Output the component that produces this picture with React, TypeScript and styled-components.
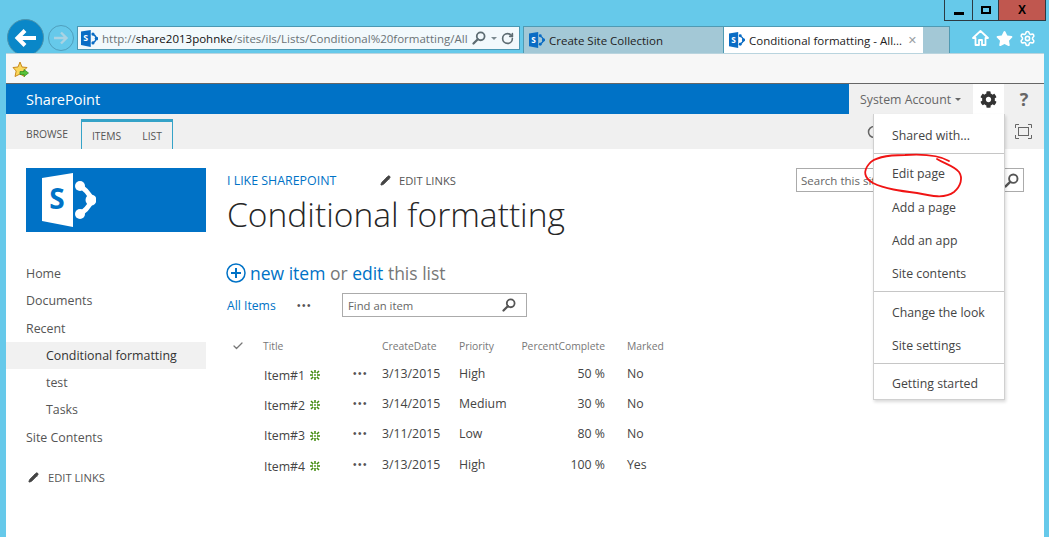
import React from 'react';
import styled, { createGlobalStyle } from 'styled-components';
import { FaCog, FaStar } from 'react-icons/fa';
import { Settings, RotateCw, Pencil, Check } from 'lucide-react';

const sans = `"Open Sans", "Liberation Sans", sans-serif`;

const GlobalStyle = createGlobalStyle`
  html, body { margin: 0; padding: 0; background: #66c9ea; }
  * { box-sizing: border-box; }
`;

const navLinks = [
  { label: 'Home' },
  { label: 'Documents' },
  { label: 'Recent' },
  { label: 'Conditional formatting', sub: true, active: true },
  { label: 'test', sub: true },
  { label: 'Tasks', sub: true },
  { label: 'Site Contents' },
];

const rows = [
  ['Item#1', '3/13/2015', 'High', '50 %', 'No'],
  ['Item#2', '3/14/2015', 'Medium', '30 %', 'No'],
  ['Item#3', '3/11/2015', 'Low', '80 %', 'No'],
  ['Item#4', '3/13/2015', 'High', '100 %', 'Yes'],
];

const menuSections = [
  ['Shared with...'],
  ['Edit page', 'Add a page', 'Add an app', 'Site contents'],
  ['Change the look', 'Site settings'],
  ['Getting started'],
];

function SpMark({ size, doc, node, letter }: { size: number; doc: string; node: string; letter: string }) {
  return (
    <svg width={size} height={size} viewBox="0 0 54 54">
      <polygon points="0,5 31,0 31,54 0,48" fill={doc} />
      <text x="15" y="36" textAnchor="middle" fontFamily={sans} fontWeight="700" fontSize="28" fill={letter}>
        S
      </text>
      <path d="M37 13 Q45 16 50 27 Q45 38 37 41" fill="none" stroke={node} strokeWidth="5" />
      <circle cx="38" cy="13" r="5" fill={node} />
      <circle cx="49" cy="27" r="5.500" fill={node} />
      <circle cx="38" cy="41" r="5" fill={node} />
    </svg>
  );
}

function Magnifier({ color = '#555', size = 15 }: { color?: string; size?: number }) {
  return (
    <svg width={size} height={size} viewBox="0 0 15 15">
      <circle cx="9.3" cy="5.7" r="4.2" fill="none" stroke={color} strokeWidth="1.9" />
      <path d="M6.2 8.8 L1.6 13.4" stroke={color} strokeWidth="2.4" strokeLinecap="round" />
    </svg>
  );
}

function NewBadge() {
  return (
    <svg width="10" height="10" viewBox="0 0 10 10">
      <g stroke="#3f8a0c" strokeWidth="1.5">
        <path d="M1 1 L9 9 M9 1 L1 9 M5 0 V10 M0 5 H10" />
      </g>
      <rect x="3" y="3" width="4" height="4" fill="#fff" />
      <rect x="4.2" y="4.2" width="1.6" height="1.6" fill="#3f8a0c" />
    </svg>
  );
}

export default function App() {
  return (
    <>
      <GlobalStyle />
      <Frame>
        <TitleRow>
          <WinButton $w={29}>
            <MinGlyph />
          </WinButton>
          <WinButton $w={27}>
            <MaxGlyph />
          </WinButton>
          <WinButton $w={48} $close>
            <CloseGlyph>X</CloseGlyph>
          </WinButton>
        </TitleRow>
        <NavRow>
          <BackButton>
            <svg width="24" height="20" viewBox="0 0 24 20">
              <path d="M22 10 H4 M11 2.5 L3.5 10 L11 17.5" fill="none" stroke="#fff" strokeWidth="4" />
            </svg>
          </BackButton>
          <ForwardButton>
            <svg width="16" height="14" viewBox="0 0 16 14">
              <path d="M1 7 H13 M8 1.5 L13.5 7 L8 12.5" fill="none" stroke="#a9d3e3" strokeWidth="2.4" />
            </svg>
          </ForwardButton>
          <AddressBar>
            <SpMark size={17} doc="#0a6cc4" node="#0a6cc4" letter="#fff" />
            <Url>
              http://<b>share2013pohnke</b>/sites/ils/Lists/Conditional%20formatting/All
            </Url>
            <AddressTools>
              <Magnifier color="#5d6c72" size={14} />
              <Caret $color="#7b8a90" />
              <RotateCw size={13} color="#5d6c72" strokeWidth={3} />
            </AddressTools>
          </AddressBar>
          <Tabs>
            <BrowserTab>
              <SpMark size={16} doc="#0a6cc4" node="#0a6cc4" letter="#fff" />
              <TabLabel>Create Site Collection</TabLabel>
            </BrowserTab>
            <BrowserTab $active>
              <SpMark size={16} doc="#0a6cc4" node="#0a6cc4" letter="#fff" />
              <TabLabel>Conditional formatting - All...</TabLabel>
              <TabClose>✕</TabClose>
            </BrowserTab>
          </Tabs>
          <ToolIcons>
            <svg width="17" height="16" viewBox="0 0 17 16">
              <path
                d="M8.5 1 L16 8 H13.5 V15 H10 V10 H7 V15 H3.5 V8 H1 Z"
                fill="none"
                stroke="#fff"
                strokeWidth="1.8"
                strokeLinejoin="round"
              />
            </svg>
            <FaStar size={17} color="#fff" />
            <Settings size={17} color="#fff" strokeWidth={2.2} />
          </ToolIcons>
        </NavRow>
        <Page>
          <FavBar>
            <svg width="17" height="17" viewBox="0 0 17 17">
              <polygon
                points="8,1 10,6 15,6.500 11.500,10 12.500,15.500 8,13 3,15.500 4.200,10 1,6.500 6,6"
                fill="#fbd75b"
                stroke="#c98a1c"
                strokeWidth="1"
              />
              <path d="M8 10.500 H12 V8.500 L16.500 12 L12 15.500 V13.500 H8 Z" fill="#57c23a" stroke="#2f8a1f" strokeWidth=".7" />
            </svg>
          </FavBar>
          <SuiteBar>
            <Brand>SharePoint</Brand>
            <Account>
              System Account
              <Caret $color="#666" />
            </Account>
            <GearCell>
              <FaCog size={17} color="#333" />
            </GearCell>
            <HelpCell>?</HelpCell>
          </SuiteBar>
          <Ribbon>
            <RibbonTab>BROWSE</RibbonTab>
            <ContextGroup>
              <RibbonTab>ITEMS</RibbonTab>
              <RibbonTab>LIST</RibbonTab>
            </ContextGroup>
            <RibbonTools>
              <svg width="9" height="14" viewBox="0 0 9 14">
                <path d="M8 1.500 A5.500 5.500 0 0 0 8 12.500" fill="none" stroke="#666" strokeWidth="1.500" />
              </svg>
              <svg width="17" height="15" viewBox="0 0 17 15">
                <path
                  d="M0.500 4 V0.500 H4 M13 0.500 H16.500 V4 M16.500 11 V14.500 H13 M4 14.500 H0.500 V11"
                  fill="none"
                  stroke="#666"
                />
                <rect x="3.500" y="3.500" width="10" height="8" fill="none" stroke="#666" />
              </svg>
            </RibbonTools>
          </Ribbon>
          <Body>
            <LeftColumn>
              <Logo>
                <SpMark size={54} doc="#fff" node="#fff" letter="#0072c6" />
              </Logo>
              <SideNav>
                {navLinks.map((link) => (
                  <SideLink key={link.label} $sub={link.sub} $active={link.active}>
                    {link.label}
                  </SideLink>
                ))}
              </SideNav>
              <SideEdit>
                <Pencil size={11} color="#444" fill="#444" />
                EDIT LINKS
              </SideEdit>
            </LeftColumn>
            <Main>
              <Crumbs>
                <CrumbLink>I LIKE SHAREPOINT</CrumbLink>
                <CrumbEdit>
                  <Pencil size={11} color="#444" fill="#444" />
                  EDIT LINKS
                </CrumbEdit>
              </Crumbs>
              <Title>Conditional formatting</Title>
              <Actions>
                <svg width="20" height="20" viewBox="0 0 20 20">
                  <circle cx="10" cy="10" r="9" fill="none" stroke="#0072c6" strokeWidth="1.500" />
                  <path d="M10 5 V15 M5 10 H15" stroke="#0072c6" strokeWidth="2" />
                </svg>
                <ActionText>
                  <Accent>new item</Accent> or <Accent>edit</Accent> this list
                </ActionText>
              </Actions>
              <ViewRow>
                <ViewLink>All Items</ViewLink>
                <Dots $view>•••</Dots>
                <FindBox>
                  Find an item
                  <Magnifier size={14} />
                </FindBox>
              </ViewRow>
              <HeaderRow>
                <Check size={12} color="#777" strokeWidth={2.5} />
                <span>Title</span>
                <span />
                <span>CreateDate</span>
                <span>Priority</span>
                <RightCell>PercentComplete</RightCell>
                <span>Marked</span>
              </HeaderRow>
              {rows.map(([title, date, priority, percent, marked]) => (
                <ItemRow key={title}>
                  <span />
                  <ItemTitle>
                    {title}
                    <NewBadge />
                  </ItemTitle>
                  <Dots>•••</Dots>
                  <span>{date}</span>
                  <span>{priority}</span>
                  <RightCell>{percent}</RightCell>
                  <span>{marked}</span>
                </ItemRow>
              ))}
            </Main>
            <SiteSearch>
              Search this site
              <Magnifier size={15} />
            </SiteSearch>
          </Body>
          <Menu>
            {menuSections.map((section) => (
              <MenuSection key={section[0]}>
                {section.map((label) => (
                  <MenuItem key={label}>{label}</MenuItem>
                ))}
              </MenuSection>
            ))}
          </Menu>
          <Scribble width="110" height="60" viewBox="0 0 110 60">
            <path
              d="M88 9 C78 3 60 2 44 3 C30 3 14 4 8 12 C2 19 3 26 12 31 C24 37 40 39 56 41 C70 44 84 47 93 40 C100 34 102 26 98 20 C93 14 84 12 76 7"
              fill="none"
              stroke="#f01414"
              strokeWidth="1.800"
              strokeLinecap="round"
            />
          </Scribble>
        </Page>
      </Frame>
    </>
  );
}

const Frame = styled.div`
  width: 1049px;
  height: 537px;
  overflow: hidden;
  display: flex;
  flex-direction: column;
  background: #66c9ea;
  font-family: ${sans};
`;

const TitleRow = styled.div`
  height: 20px;
  display: flex;
  justify-content: flex-end;
  padding-right: 3px;
`;

const WinButton = styled.div<{ $w: number; $close?: boolean }>`
  width: ${(p) => p.$w}px;
  height: 21px;
  display: flex;
  align-items: center;
  justify-content: center;
  border: 1px solid #2c3a42;
  border-top: 0;
  margin-left: -1px;
  background: ${(p) => (p.$close ? '#c0574f' : 'transparent')};
`;

const MinGlyph = styled.div`
  width: 10px;
  height: 3px;
  margin-top: 7px;
  background: #000;
`;

const MaxGlyph = styled.div`
  width: 10px;
  height: 8px;
  border: 2px solid #000;
`;

const CloseGlyph = styled.span`
  font: 700 12px "Liberation Sans", sans-serif;
  color: #000;
`;

const NavRow = styled.div`
  height: 33px;
  display: flex;
  align-items: flex-start;
  padding-top: 6px;
`;

const BackButton = styled.div`
  width: 37px;
  height: 37px;
  margin: -7px 0 0 7px;
  flex: none;
  display: flex;
  align-items: center;
  justify-content: center;
  border-radius: 50%;
  background: #0a87c8;
  border: 1px solid #4b93ad;
`;

const ForwardButton = styled.div`
  width: 26px;
  height: 26px;
  margin: -1px 0 0 4px;
  flex: none;
  display: flex;
  align-items: center;
  justify-content: center;
  border-radius: 50%;
  border: 1px solid #4f9fbd;
`;

const AddressBar = styled.div`
  width: 443px;
  height: 24px;
  margin-left: 3px;
  padding: 0 5px 0 3px;
  flex: none;
  display: flex;
  align-items: center;
  gap: 4px;
  background: #f2f9fc;
  border: 1px solid #4a98b3;
`;

const Url = styled.div`
  flex: 1;
  white-space: nowrap;
  font-size: 11.500px;
  color: #6a7276;

  b {
    font-weight: 400;
    color: #111;
  }
`;

const AddressTools = styled.div`
  display: flex;
  align-items: center;
  gap: 4px;
`;

const Caret = styled.span<{ $color: string }>`
  display: inline-block;
  width: 0;
  height: 0;
  margin-left: 1px;
  border-left: 3.500px solid transparent;
  border-right: 3.500px solid transparent;
  border-top: 3.500px solid ${(p) => p.$color};
`;

const Tabs = styled.div`
  width: 427px;
  height: 27px;
  margin-left: 3px;
  flex: none;
  display: flex;
  background: #a3c8d6;
  border: 1px solid #4f9ab3;
  border-bottom: 0;
`;

const BrowserTab = styled.div<{ $active?: boolean }>`
  width: ${(p) => (p.$active ? 200 : 199)}px;
  display: flex;
  align-items: center;
  gap: 4px;
  padding: 0 6px 0 5px;
  background: ${(p) => (p.$active ? '#fff' : 'transparent')};
  ${(p) => p.$active && 'border-left: 1px solid #4f9ab3;'}
`;

const TabLabel = styled.span`
  flex: 1;
  white-space: nowrap;
  font-size: 11.500px;
  color: #222;
`;

const TabClose = styled.span`
  font: 700 11px "DejaVu Sans", sans-serif;
  color: #9aa0a3;
`;

const ToolIcons = styled.div`
  flex: 1;
  height: 24px;
  padding: 0 13px 0 22px;
  display: flex;
  align-items: center;
  justify-content: space-between;
`;

const Page = styled.div`
  position: relative;
  flex: 1;
  z-index: 1;
  margin: 0 5px 0 6px;
  display: flex;
  flex-direction: column;
  background: #fff;
`;

const FavBar = styled.div`
  height: 31px;
  padding: 7px 0 0 6px;
  background: #f7f7f7;
  border-top: 1px solid #b9d4de;
  border-bottom: 1px solid #666;
`;

const SuiteBar = styled.div`
  height: 30px;
  display: flex;
  align-items: stretch;
`;

const Brand = styled.div`
  flex: 1;
  padding-left: 20px;
  display: flex;
  align-items: center;
  background: #0072c6;
  color: #fff;
  font-size: 14.500px;
`;

const Account = styled.div`
  width: 124px;
  padding-left: 11px;
  display: flex;
  align-items: center;
  gap: 3px;
  background: #f0f0f0;
  color: #666;
  font-size: 12.300px;
  white-space: nowrap;
`;

const GearCell = styled.div`
  width: 31px;
  display: flex;
  align-items: center;
  justify-content: center;
`;

const HelpCell = styled.div`
  width: 40px;
  display: flex;
  align-items: center;
  justify-content: center;
  background: #f0f0f0;
  color: #666;
  font-size: 18px;
  font-weight: 700;
`;

const Ribbon = styled.div`
  height: 35px;
  display: flex;
  align-items: flex-end;
  padding-left: 20px;
  background: #f0f0f0;
`;

const RibbonTab = styled.div`
  height: 30px;
  padding: 0 9px;
  display: flex;
  align-items: center;
  font-size: 10.300px;
  color: #555;

  &:first-child {
    padding-left: 0;
  }
`;

const ContextGroup = styled.div`
  width: 92px;
  height: 30px;
  margin-left: 4px;
  display: flex;
  justify-content: space-between;
  padding: 0 10px;
  border: 1px solid #35a3c8;
  border-top-width: 3px;
  border-bottom: 0;

  ${RibbonTab} {
    height: 27px;
    padding: 0;
  }
`;

const RibbonTools = styled.div`
  margin-left: auto;
  width: 178px;
  height: 35px;
  padding-right: 12px;
  display: flex;
  align-items: center;
  justify-content: space-between;
`;

const Body = styled.div`
  flex: 1;
  display: flex;
  align-items: flex-start;
  padding: 19px 20px 0 0;
`;

const LeftColumn = styled.div`
  width: 200px;
  flex: none;
`;

const Logo = styled.div`
  width: 180px;
  height: 64px;
  margin-left: 20px;
  padding: 5px 0 0 16px;
  background: #0072c6;
`;

const SideNav = styled.div`
  margin-top: 28px;
`;

const SideLink = styled.div<{ $sub?: boolean; $active?: boolean }>`
  height: 27.250px;
  padding-left: ${(p) => (p.$sub ? 40 : 20)}px;
  display: flex;
  align-items: center;
  font-size: 12.400px;
  color: ${(p) => (p.$active ? '#333' : '#555')};
  background: ${(p) => (p.$active ? '#f1f1f1' : 'transparent')};
`;

const SideEdit = styled.div`
  margin: 19px 0 0 22px;
  display: flex;
  align-items: center;
  gap: 9px;
  font-size: 11.200px;
  color: #555;
`;

const Main = styled.div`
  flex: 1;
  margin-left: 21px;
`;

const Crumbs = styled.div`
  height: 24px;
  display: flex;
  align-items: center;
`;

const CrumbLink = styled.div`
  width: 153px;
  font-size: 12.400px;
  color: #0072c6;
`;

const CrumbEdit = styled.div`
  display: flex;
  align-items: center;
  gap: 8px;
  font-size: 11.200px;
  color: #555;
`;

const Title = styled.h1`
  margin: 0;
  height: 45px;
  line-height: 45px;
  font-size: 33.600px;
  font-weight: 300;
  color: #262626;
  white-space: nowrap;
`;

const Actions = styled.div`
  height: 30px;
  margin: 21px 0 0 -1px;
  display: flex;
  align-items: center;
  gap: 4px;
`;

const ActionText = styled.div`
  font-size: 17.500px;
  color: #777;
  white-space: nowrap;
`;

const Accent = styled.span`
  color: #0072c6;
`;

const ViewRow = styled.div`
  height: 24px;
  margin-top: 5px;
  display: flex;
  align-items: center;
`;

const ViewLink = styled.div`
  width: 70px;
  font-size: 12.200px;
  color: #0072c6;
`;

const Dots = styled.span<{ $view?: boolean }>`
  font: 10px "Liberation Sans", sans-serif;
  letter-spacing: 1.500px;
  color: #555;
  ${(p) => p.$view && 'width: 45px;'}
`;

const FindBox = styled.div`
  width: 185px;
  height: 24px;
  padding: 0 10px 0 5px;
  display: flex;
  align-items: center;
  justify-content: space-between;
  border: 1px solid #ababab;
  font-size: 11.300px;
  color: #666;
`;

const gridColumns = '36px 90px 29px 77px 62px 84px 59px';

const HeaderRow = styled.div`
  margin-top: 16px;
  height: 25px;
  display: grid;
  grid-template-columns: ${gridColumns};
  align-items: center;
  font-size: 10.350px;
  color: #777;
  white-space: nowrap;

  svg {
    margin-left: 5px;
  }

  span:last-child {
    padding-left: 22px;
  }
`;

const ItemRow = styled.div`
  height: 30.300px;
  display: grid;
  grid-template-columns: ${gridColumns};
  align-items: center;
  font-size: 12.300px;
  color: #444;
  white-space: nowrap;

  span:last-child {
    padding-left: 22px;
  }
`;

const RightCell = styled.span`
  text-align: right;
`;

const ItemTitle = styled.span`
  display: flex;
  align-items: center;
  gap: 5px;
  padding: 4px 0 0 1px;
`;

const SiteSearch = styled.div`
  width: 228px;
  height: 24px;
  flex: none;
  padding: 0 4px 0 4px;
  display: flex;
  align-items: center;
  justify-content: space-between;
  background: #fff;
  border: 1px solid #ababab;
  font-size: 11.500px;
  color: #666;
`;

const Menu = styled.div`
  position: absolute;
  top: 61px;
  left: 867px;
  width: 132px;
  height: 286px;
  padding-top: 2px;
  background: #fff;
  border: 1px solid #d0d0d0;
  border-top: 0;
  box-shadow: 1px 2px 3px rgba(0, 0, 0, 0.15);
`;

const MenuSection = styled.div`
  padding: 3px 0 1px;
  border-bottom: 1px solid #c6c6c6;

  &:last-child {
    border-bottom: 0;
  }
`;

const MenuItem = styled.div`
  height: 33.300px;
  padding-left: 18px;
  display: flex;
  align-items: center;
  font-size: 12.300px;
  color: #444;
`;

const Scribble = styled.svg`
  position: absolute;
  top: 99px;
  left: 855px;
`;
